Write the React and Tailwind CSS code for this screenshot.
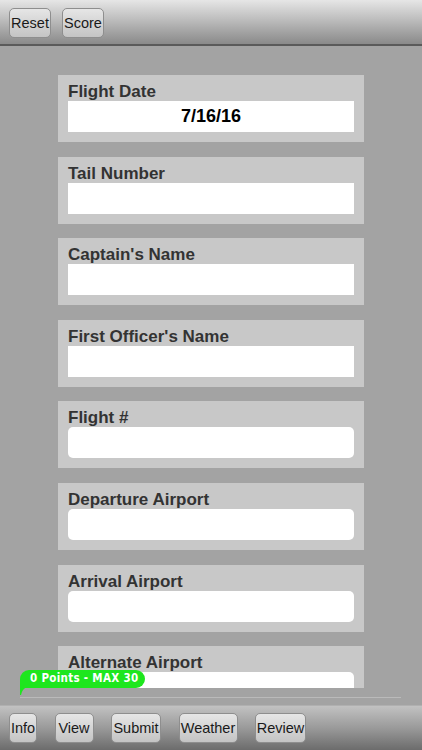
import React from 'react';

const fields = [
  { label: 'Flight Date', value: '7/16/16', rounded: false },
  { label: 'Tail Number', value: '', rounded: false },
  { label: "Captain's Name", value: '', rounded: false },
  { label: "First Officer's Name", value: '', rounded: false },
  { label: 'Flight #', value: '', rounded: true },
  { label: 'Departure Airport', value: '', rounded: true },
  { label: 'Arrival Airport', value: '', rounded: true },
  { label: 'Alternate Airport', value: '', rounded: true },
];

const bottomButtons = [
  { label: 'Info', w: 'w-[28px]' },
  { label: 'View', w: 'w-[39px]' },
  { label: 'Submit', w: 'w-[50px]' },
  { label: 'Weather', w: 'w-[59px]' },
  { label: 'Review', w: 'w-[51px]' },
];

function BarButton({ label, className = '' }) {
  return (
    <button
      className={`h-[30px] rounded-[5px] border border-[#8e8e8e] bg-gradient-to-b from-[#e6e6e6] to-[#c4c4c4] text-[14.5px] leading-none text-[#1a1a1a] flex items-center justify-center ${className}`}
    >
      {label}
    </button>
  );
}

function Field({ label, value, rounded }) {
  return (
    <div className="h-[67px] w-[306px] bg-[#c8c8c8] px-[10px] flex flex-col shrink-0">
      <div className="h-[26px] pt-[7px] text-[17px] font-bold leading-[19px] text-[#333]">{label}</div>
      <div
        className={`h-[31px] bg-white flex items-center justify-center text-[18px] font-bold text-black ${rounded ? 'rounded-[5px]' : ''}`}
      >
        {value}
      </div>
    </div>
  );
}

export default function App() {
  return (
    <div
      className="relative w-[422px] h-[750px] bg-[#a3a3a3] flex flex-col overflow-hidden"
      style={{ fontFamily: '"Liberation Sans", Arial, sans-serif' }}
    >
      {/* Top toolbar */}
      <div className="h-[46px] shrink-0 bg-gradient-to-b from-[#e6e6e6] via-[#b8b8b8] to-[#8a8a8a] border-b-2 border-[#5a5a5a] flex items-start pt-[8px] pl-[9px] gap-[11px]">
        <BarButton label="Reset" className="w-[42px]" />
        <BarButton label="Score" className="w-[42px]" />
      </div>

      {/* Form scroll area */}
      <div className="h-[642px] shrink-0 overflow-hidden pt-[29px] flex flex-col items-start pl-[58px] gap-[14.6px]">
        {fields.map((f) => (
          <Field key={f.label} {...f} />
        ))}
      </div>

      {/* Scroll indicator strip */}
      <div className="h-[17px] shrink-0 pt-[9px] pl-[20px]">
        <div className="w-[381px] h-[1px] bg-[#bababa]" />
      </div>

      {/* Points badge */}
      <div className="absolute left-[20px] top-[670px]">
        <div className="h-[18px] w-[125px] rounded-tl-[9px] rounded-r-[9px] bg-[#1ee61e] flex items-center pl-[10px]">
          <span
            className="text-[11.5px] font-bold text-white tracking-[0.3px]"
            style={{ fontFamily: '"DejaVu Sans Condensed", "DejaVu Sans", sans-serif' }}
          >
            0 Points - MAX 30
          </span>
        </div>
        <svg className="absolute left-0 top-[16px]" width="8" height="10" viewBox="0 0 8 10">
          <path d="M0 0 L8 0 Q2 3 1 9 L0 9 Z" fill="#1ee61e" />
        </svg>
      </div>

      {/* Bottom toolbar */}
      <div className="flex-1 bg-gradient-to-b from-[#c2c2c2] via-[#9a9a9a] to-[#6c6c6c] border-t border-[#b0b0b0] flex items-start pt-[7px] pl-[9px] gap-[17.5px]">
        {bottomButtons.map((b) => (
          <BarButton key={b.label} label={b.label} className={b.w} />
        ))}
      </div>
    </div>
  );
}
